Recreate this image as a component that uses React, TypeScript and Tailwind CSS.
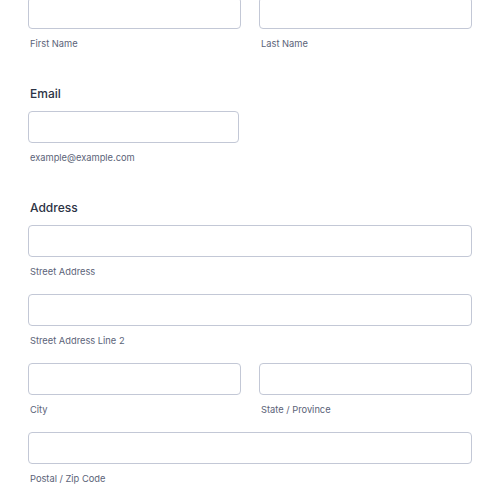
const inputCls = "block h-8 w-full rounded-[4px] border border-[#c3c8d6] bg-white";
const subCls = "mt-[8px] pl-[2px] text-[9.3px] leading-[14px] text-[#5b6378]";
const headCls = "mt-[33px] pl-[2px] text-[12px] leading-5 font-medium text-[#2c3345]";

function Field({ label, className = "" }: { label: string; className?: string }) {
  return (
    <div className={className}>
      <div className={inputCls} />
      <p className={subCls}>{label}</p>
    </div>
  );
}

export default function App() {
  return (
    <div className="min-h-[484px] overflow-hidden bg-white px-7 font-['Inter',sans-serif]">
      <div className="-mt-[3px] grid grid-cols-2 gap-x-[18px]">
        <Field label="First Name" />
        <Field label="Last Name" />
      </div>

      <h2 className={headCls}>Email</h2>
      <Field label="example@example.com" className="mt-[7px] w-[211px]" />

      <h2 className={headCls}>Address</h2>
      <div className="mt-[7px] flex flex-col gap-[15px]">
        <Field label="Street Address" />
        <Field label="Street Address Line 2" />
        <div className="grid grid-cols-2 gap-x-[18px]">
          <Field label="City" />
          <Field label="State / Province" />
        </div>
        <Field label="Postal / Zip Code" />
      </div>
    </div>
  );
}
